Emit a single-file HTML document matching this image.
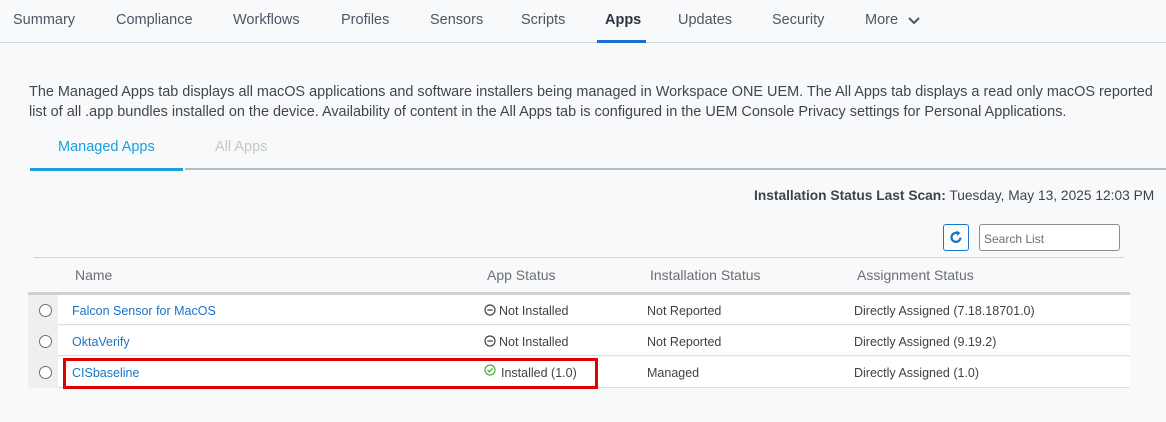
<!DOCTYPE html>
<html><head><meta charset="utf-8"><style>
*{margin:0;padding:0;box-sizing:border-box}
body{width:1166px;height:422px;background:#f8f9fa;font-family:"Liberation Sans",sans-serif;color:#4a4f55;position:relative;overflow:hidden}
.a{position:absolute;white-space:nowrap}
.nav{font-size:14.5px;color:#4d5661;top:12px}
.lk{color:#1a73c8;font-size:12.5px}
.c{font-size:12.5px;color:#3e4247}
.h{font-size:14px;color:#6b6e72;top:267px}
.rad{position:absolute;left:39px;width:13px;height:13px;border:1px solid #6f6f6f;border-radius:50%;background:#fff}
</style></head><body>
<div class="a nav" style="left:13px">Summary</div>
<div class="a nav" style="left:116px">Compliance</div>
<div class="a nav" style="left:233px">Workflows</div>
<div class="a nav" style="left:341px">Profiles</div>
<div class="a nav" style="left:430px">Sensors</div>
<div class="a nav" style="left:521px">Scripts</div>
<div class="a nav" style="left:605px;color:#2f3540;font-weight:bold">Apps</div>
<div class="a nav" style="left:678px">Updates</div>
<div class="a nav" style="left:772px">Security</div>
<div class="a nav" style="left:865px">More</div>
<svg class="a" style="left:907px;top:16px" width="14" height="10" viewBox="0 0 14 10"><path d="M2 2l5 5 5-5" fill="none" stroke="#4d5661" stroke-width="2"/></svg>
<div class="a" style="left:0;top:42px;width:1166px;height:1px;background:#cdd6dc"></div>
<div class="a" style="left:597px;top:40px;width:49px;height:3px;background:#1b6fd0"></div>
<div class="a" style="left:29px;top:82px;font-size:14.45px;line-height:20px;color:#41464b">The Managed Apps tab displays all macOS applications and software installers being managed in Workspace ONE UEM. The All Apps tab displays a read only macOS reported<br>list of all .app bundles installed on the device. Availability of content in the All Apps tab is configured in the UEM Console Privacy settings for Personal Applications.</div>
<div class="a" style="left:58px;top:139px;font-size:14.5px;color:#1aa0dc">Managed Apps</div>
<div class="a" style="left:215px;top:139px;font-size:14.5px;color:#c3c6c9">All Apps</div>
<div class="a" style="left:30px;top:168px;width:153px;height:3px;background:#1aa0dc"></div>
<div class="a" style="left:185px;top:168px;width:981px;height:2px;background:#b8bbbe"></div>
<div class="a" style="left:754px;top:188px;font-size:13.75px;color:#3e434a"><b>Installation Status Last Scan:</b> Tuesday, May 13, 2025 12:03 PM</div>
<div class="a" style="left:943px;top:224px;width:26px;height:27px;border:1px solid #1a73c8;border-radius:3px;background:#fff"></div>
<svg class="a" style="left:948px;top:229px" width="16" height="16" viewBox="0 0 16 16"><path d="M12.5 8.5A4.5 4.5 0 1 1 10 4.3" fill="none" stroke="#1a73c8" stroke-width="2.2"/><path d="M8.5 1.5l4 2.5-3.5 3z" fill="#1a73c8"/></svg>
<div class="a" style="left:979px;top:224px;width:141px;height:27px;border:1px solid #8a8d90;border-radius:3px;background:#fff;font-size:12px;color:#6b6e72;padding:7px 4px">Search List</div>
<div class="a" style="left:34px;top:257px;width:1090px;height:1px;background:#cfd4d7"></div>
<div class="a h" style="left:75px">Name</div>
<div class="a h" style="left:487px">App Status</div>
<div class="a h" style="left:650px">Installation Status</div>
<div class="a h" style="left:857px">Assignment Status</div>
<div class="a" style="left:28px;top:292px;width:1102px;height:3px;background:#cfd0d2"></div>
<div class="a" style="left:28px;top:295px;width:30px;height:93px;background:#eeeff0"></div>
<div class="a" style="left:58px;top:295px;width:1072px;height:30px;background:#fff;border-bottom:1px solid #dcdfe1"></div>
<div class="a" style="left:58px;top:326px;width:1072px;height:30px;background:#fff;border-bottom:1px solid #dcdfe1"></div>
<div class="a" style="left:58px;top:357px;width:1072px;height:31px;background:#fff;border-bottom:1px solid #dcdfe1"></div>
<div class="rad" style="top:304px"></div><div class="rad" style="top:335px"></div><div class="rad" style="top:366px"></div>
<div class="a lk" style="left:72px;top:304px">Falcon Sensor for MacOS</div>
<div class="a lk" style="left:72px;top:335px">OktaVerify</div>
<div class="a lk" style="left:72px;top:366px">CISbaseline</div>
<svg class="a" style="left:484px;top:304px" width="12" height="12" viewBox="0 0 12 12"><circle cx="6" cy="6" r="5" fill="none" stroke="#444" stroke-width="1.2"/><path d="M3.3 6h5.4" stroke="#444" stroke-width="1.3"/></svg>
<div class="a c" style="left:499px;top:304px">Not Installed</div>
<svg class="a" style="left:484px;top:335px" width="12" height="12" viewBox="0 0 12 12"><circle cx="6" cy="6" r="5" fill="none" stroke="#444" stroke-width="1.2"/><path d="M3.3 6h5.4" stroke="#444" stroke-width="1.3"/></svg>
<div class="a c" style="left:499px;top:335px">Not Installed</div>
<svg class="a" style="left:484px;top:364px" width="12" height="12" viewBox="0 0 12 12"><circle cx="6" cy="6" r="5" fill="none" stroke="#4caf3a" stroke-width="1.2"/><path d="M3.5 6l1.8 1.8 3.3-3.5" fill="none" stroke="#4caf3a" stroke-width="1.3"/></svg>
<div class="a c" style="left:501px;top:366px">Installed (1.0)</div>
<div class="a c" style="left:647px;top:304px">Not Reported</div>
<div class="a c" style="left:647px;top:335px">Not Reported</div>
<div class="a c" style="left:647px;top:366px">Managed</div>
<div class="a c" style="left:854px;top:304px">Directly Assigned (7.18.18701.0)</div>
<div class="a c" style="left:854px;top:335px">Directly Assigned (9.19.2)</div>
<div class="a c" style="left:854px;top:366px">Directly Assigned (1.0)</div>
<div class="a" style="left:63px;top:358px;width:535px;height:31px;border:3px solid #e00000"></div>
</body></html>
